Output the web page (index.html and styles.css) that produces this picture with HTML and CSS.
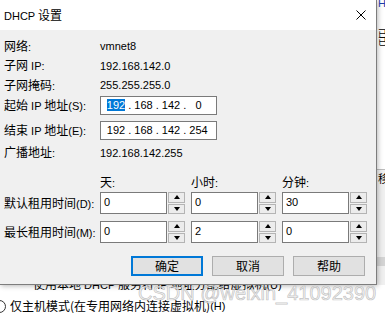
FILE: index.html
```html
<!DOCTYPE html>
<html>
<head>
<meta charset="utf-8">
<link rel="stylesheet" href="styles.css">
</head>
<body>
<div class="screen">
  <div class="backwin">
    <div class="strip-top">
      <span class="bw-hc">HC</span>
      <span class="bw-c1 cj">已</span>
      <span class="bw-c2 cj">已</span>
    </div>
    <div class="strip-mid">
      <span class="bw-c3 cj">移</span>
      <div class="bw-band"></div>
    </div>
    <div class="bw-hidden"><span class="cj">使用本地</span> DHCP <span class="cj">服务将</span> IP <span class="cj">地址分配给虚拟机</span>(U)</div>
    <div class="bw-radio"><span class="radio"></span><span class="cj">仅主机模式(在专用网络内连接虚拟机)</span>(H)</div>
  </div>

  <div class="dialog">
    <div class="titlebar">
      <span class="title">DHCP <span class="cj">设置</span></span>
      <svg class="close" width="10" height="10" viewBox="0 0 10 10"><path d="M0.5 0.5 L9.5 9.5 M9.5 0.5 L0.5 9.5" stroke="#000" stroke-width="1" fill="none"/></svg>
    </div>
    <div class="body">
      <div class="row r-net"><span class="lbl"><span class="cj">网络</span>:</span><span class="val">vmnet8</span></div>
      <div class="row r-ip"><span class="lbl"><span class="cj">子网</span> IP:</span><span class="val">192.168.142.0</span></div>
      <div class="row r-mask"><span class="lbl"><span class="cj">子网掩码</span>:</span><span class="val">255.255.255.0</span></div>
      <div class="row r-start"><span class="lbl"><span class="cj">起始</span> IP <span class="cj">地址</span>(S):</span>
        <div class="ipbox"><span class="seg"><span class="sel">192</span></span><span class="dot">.</span><span class="seg">168</span><span class="dot">.</span><span class="seg">142</span><span class="dot">.</span><span class="seg">0</span></div>
      </div>
      <div class="row r-end"><span class="lbl"><span class="cj">结束</span> IP <span class="cj">地址</span>(E):</span>
        <div class="ipbox"><span class="seg">192</span><span class="dot">.</span><span class="seg">168</span><span class="dot">.</span><span class="seg">142</span><span class="dot">.</span><span class="seg">254</span></div>
      </div>
      <div class="row r-bc"><span class="lbl"><span class="cj">广播地址</span>:</span><span class="val">192.168.142.255</span></div>
      <div class="row r-head"><span class="lbl"></span>
        <div class="cols"><span class="col"><span class="cj">天</span>:</span><span class="col"><span class="cj">小时</span>:</span><span class="col"><span class="cj">分钟</span>:</span></div>
      </div>
      <div class="row r-def"><span class="lbl"><span class="cj">默认租用时间</span>(D):</span>
        <div class="cols">
          <div class="spin"><div class="edit">0</div><div class="updown"><span class="ud up"></span><span class="ud down"></span></div></div>
          <div class="spin"><div class="edit">0</div><div class="updown"><span class="ud up"></span><span class="ud down"></span></div></div>
          <div class="spin"><div class="edit">30</div><div class="updown"><span class="ud up"></span><span class="ud down"></span></div></div>
        </div>
      </div>
      <div class="row r-max"><span class="lbl"><span class="cj">最长租用时间</span>(M):</span>
        <div class="cols">
          <div class="spin"><div class="edit">0</div><div class="updown"><span class="ud up"></span><span class="ud down"></span></div></div>
          <div class="spin"><div class="edit">2</div><div class="updown"><span class="ud up"></span><span class="ud down"></span></div></div>
          <div class="spin"><div class="edit">0</div><div class="updown"><span class="ud up"></span><span class="ud down"></span></div></div>
        </div>
      </div>
      <div class="buttons">
        <button class="btn default cj">确定</button>
        <button class="btn cj">取消</button>
        <button class="btn cj">帮助</button>
      </div>
    </div>
  </div>

  <div class="watermark">CSDN @weixin_41092390</div>
</div>
</body>
</html>
```
FILE: styles.css
```css
* { box-sizing: border-box; }
html, body { margin: 0; padding: 0; }
body {
  width: 385px; height: 313px; overflow: hidden; background: #fff;
  font-family: "Liberation Sans", "Noto Sans CJK SC", sans-serif;
  font-size: 11px; color: #000;
}
.cj { font-family: "Noto Sans CJK SC", sans-serif; font-size: 12px; }
.screen { position: relative; width: 385px; height: 313px; overflow: hidden; }

/* background window */
.backwin { position: absolute; inset: 0; background: #fff; z-index: 0; }
.strip-top { position: absolute; left: 377px; top: 0; width: 8px; height: 169px; background: #fff; overflow: hidden; }
.bw-hc { position: absolute; left: 1px; top: -3px; color: #1d3fae; font-size: 11px; line-height: 13px; }
.bw-c1, .bw-c2 { position: absolute; left: 1px; font-size: 9px; line-height: 8px; }
.bw-c1 { top: 30px; }
.bw-c2 { top: 38px; }
.strip-mid { position: absolute; left: 377px; top: 169px; width: 8px; height: 116px; background: #f0f0f0; border-top: 1px solid #bdbdbd; overflow: hidden; }
.bw-c3 { position: absolute; left: 1px; top: 2px; font-size: 11px; line-height: 12px; }
.bw-band { position: absolute; left: 0; top: 87px; width: 8px; height: 9px; background: #d4d4d4; }
.bw-hidden { position: absolute; left: 33px; top: 277px; line-height: 14px; white-space: nowrap; }
.bw-radio { position: absolute; left: 10px; top: 299px; line-height: 14px; white-space: nowrap; display: flex; align-items: center; }
.radio { position: absolute; left: -17px; top: 1px; width: 13px; height: 13px; border: 1px solid #333; border-radius: 50%; background: #fff; }

/* dialog */
.dialog {
  position: absolute; left: 0; top: 0; width: 377px; height: 285px; z-index: 1;
  background: #f0f0f0; border-right: 1px solid #7d7d7d; border-bottom: 1px solid #7d7d7d;
  box-shadow: 1px 1px 5px rgba(0,0,0,0.28);
  display: flex; flex-direction: column;
}
.titlebar {
  height: 30px; flex: none; background: #fff;
  display: flex; align-items: center; justify-content: space-between;
  padding: 0 10px 0 4px;
}
.title { font-size: 11px; line-height: 16px; }
.close { display: block; }
.body { flex: 1; padding: 6px 0 0 4px; display: flex; flex-direction: column; }
.row { display: flex; align-items: center; flex: none; }
.lbl { width: 96px; flex: none; white-space: nowrap; line-height: 16px; }
.val { line-height: 16px; }
.r-net { height: 20px; }
.r-ip { height: 19px; }
.r-mask { height: 20px; }
.r-start { height: 19px; margin-top: 1px; }
.r-end { height: 19px; margin-top: 6px; }
.r-bc { height: 19px; margin-top: 3px; }
.r-head { height: 20px; margin-top: 10px; }
.r-def { height: 22px; }
.r-max { height: 22px; margin-top: 7px; }

.ipbox {
  width: 117px; height: 19px; background: #fff; border: 1px solid #7a7a7a;
  display: flex; align-items: center; padding-left: 5px; line-height: 13px;
}
.seg { width: 20px; text-align: center; flex: none; }
.dot { width: 7.5px; text-align: center; flex: none; }
.sel { background: #0078d7; color: #fff; display: inline-block; padding: 0 0; line-height: 12px; }

.cols { display: flex; gap: 6px; }
.col { width: 85px; line-height: 16px; }
.spin { width: 85px; height: 22px; display: flex; gap: 1px; }
.edit {
  width: 67px; height: 22px; background: #fff; border: 1px solid #7a7a7a;
  padding: 2px 0 0 3px; line-height: 14px;
}
.updown { width: 17px; height: 22px; display: flex; flex-direction: column; gap: 1px; }
.ud { flex: 1; border: 1px solid #b4b4b4; background: #ececec; position: relative; }
.ud::after {
  content: ""; position: absolute; left: 50%; top: 50%; width: 0; height: 0;
  border-left: 3.5px solid transparent; border-right: 3.5px solid transparent;
  transform: translate(-50%, -50%);
}
.up::after { border-bottom: 4px solid #000; }
.down::after { border-top: 4px solid #000; }

.buttons { display: flex; justify-content: flex-end; gap: 9px; margin-top: 13px; padding-right: 11px; }
.btn {
  width: 72px; height: 20px; margin: 0; padding: 0;
  background: #e1e1e1; border: 1px solid #adadad; color: #000;
  line-height: 16px; cursor: default;
}
.btn.default { border: 2px solid #0078d7; }

.watermark {
  position: absolute; left: 138px; top: 283px; z-index: 3;
  font-family: "Liberation Sans", sans-serif; font-size: 20px; line-height: 20px;
  color: rgba(240,240,240,0.8); -webkit-text-stroke: 0.7px rgba(150,150,150,0.55);
  white-space: nowrap;
}
```
